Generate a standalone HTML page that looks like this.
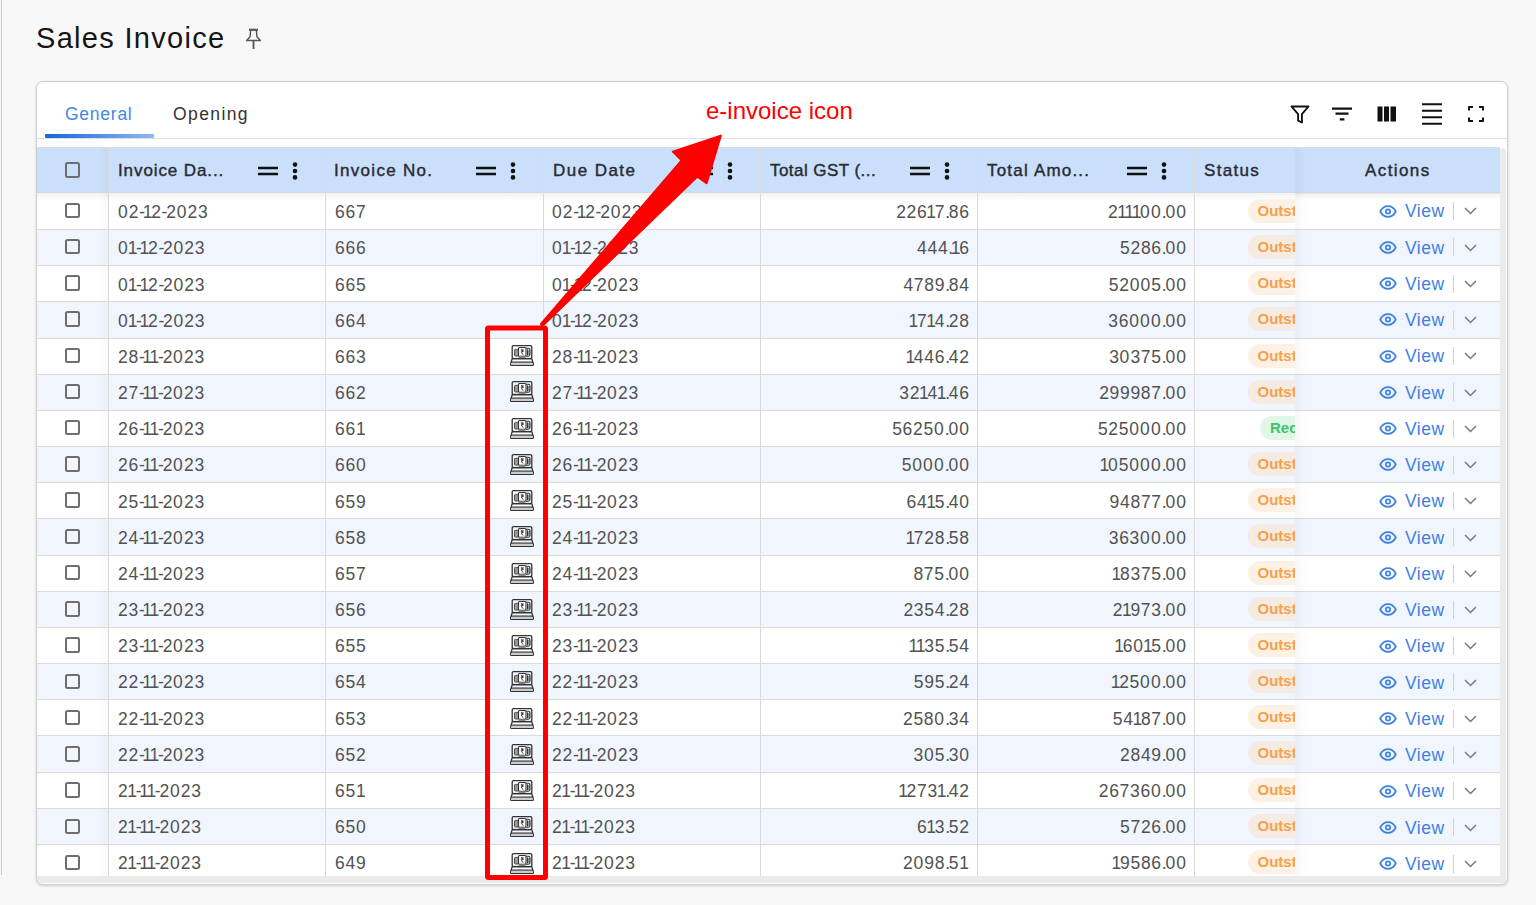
<!DOCTYPE html><html><head><meta charset="utf-8"><style>
*{box-sizing:border-box;margin:0;padding:0}
html,body{width:1536px;height:905px;overflow:hidden;background:#f8f8f8;font-family:"Liberation Sans",sans-serif;position:relative}
.abs{position:absolute}
#lline{left:1px;top:0;width:1px;height:875px;background:#c8c8c8}
#title{left:36px;top:18px;font-size:29px;line-height:40px;color:#151515;letter-spacing:1.3px;white-space:nowrap}
#card{left:36px;top:81px;width:1472px;height:804px;background:#fff;border:1px solid #cfcfcf;border-radius:7px;box-shadow:0 1px 3px rgba(0,0,0,.16);overflow:hidden}
.tab{top:104px;font-size:17.5px;line-height:20px;white-space:nowrap}
#tabline{left:45px;top:134px;width:109px;height:4px;background:linear-gradient(90deg,#1466db,#8db9f1);border-radius:1px}
#tabborder{left:37px;top:138px;width:1470px;height:1px;background:#dedede}
#hdrtop{left:37px;top:147px;width:1463px;height:1px;background:#dcdcdc}
#hdr{left:37px;top:148px;width:1463px;height:44.8px;background:#c9dffb}
.hcell{font-size:17px;font-weight:normal;-webkit-text-stroke:.4px #2a2a33;color:#2a2a33;white-space:nowrap;line-height:20px;letter-spacing:.7px}
.row{left:37px;width:1463px;height:36.16px;border-bottom:1px solid #dadada}
.alt{background:#f1f6fe}
.vline{width:1px;background:#dadada}
.txt{font-size:17.5px;color:#525252;white-space:nowrap;line-height:20px;letter-spacing:.7px}
.b{letter-spacing:-1.3px;margin-left:-1.2px}.z{letter-spacing:1.1px}.p{letter-spacing:-1.2px}.q{letter-spacing:0}
.r{text-align:right}
.cb{width:15.5px;height:15.5px;border:2px solid #6e6e6e;border-radius:2.5px}
.badge{height:24px;border-radius:12px;font-size:15px;font-weight:bold;line-height:23px;padding:0 10px;white-space:nowrap}
.bo{background:#fdf1e6;color:#f8a04a}
.bo.alt2{background:#f5ebe3}
.br{background:#e2f6e7;color:#3ec46a}
#actcol{left:1295px;top:148px;width:205px;height:728px;overflow:hidden}
.view{font-size:17.5px;color:#3f80e2;line-height:20px;white-space:nowrap;letter-spacing:.5px}
.vdiv{width:1px;height:18px;background:#cfcfcf}
#vscroll{left:1500px;top:148px;width:6px;height:735px;background:#ebebeb;border-radius:3px 3px 0 0}
#hscroll{left:37px;top:876px;width:1469px;height:7px;background:#ebebeb;border-radius:0 0 0 5px}
</style></head><body>
<div class="abs" id="lline"></div>
<div class="abs" id="title">Sales Invoice</div>
<svg class="abs" style="left:245px;top:28px" width="17" height="22" viewBox="0 0 17 22"><g fill="none" stroke="#555" stroke-width="1.4" stroke-linejoin="round"><path d="M4 1.8h9" stroke-width="2.2"/><path d="M5.6 2.5l-.5 6.2-3.5 3.8h13.8l-3.5-3.8-.5-6.2"/><path d="M8.5 12.5v8.5" stroke-width="1.8"/></g></svg>
<div class="abs" id="card"></div>
<div class="abs tab" style="left:65px;color:#3f88e9;letter-spacing:.75px">General</div>
<div class="abs tab" style="left:173px;color:#333;letter-spacing:1.4px">Opening</div>
<div class="abs" id="tabline"></div>
<div class="abs" id="tabborder"></div>
<svg class="abs" style="left:1290px;top:105px" width="20" height="19" viewBox="0 0 20 19"><path d="M1.5 1.5h17l-6.6 7.6v8.4l-3.8-1.8V9.1z" fill="none" stroke="#111" stroke-width="1.9" stroke-linejoin="round"/></svg>
<svg class="abs" style="left:1332px;top:106px" width="20" height="16" viewBox="0 0 20 16"><path d="M0 2.6h20M3.5 7.6h13M7.8 13.4h4.6" stroke="#111" stroke-width="2.2"/></svg>
<svg class="abs" style="left:1377px;top:106px" width="20" height="16" viewBox="0 0 20 16"><path d="M.5 .5h5v15h-5zM7 .5h5v15H7zM13.5 .5h5.5v15h-5.5z" fill="#111"/></svg>
<svg class="abs" style="left:1422px;top:102px" width="20" height="24" viewBox="0 0 20 24"><path d="M0 2.3h20M0 8.8h20M0 15.2h20M0 21.7h20" stroke="#111" stroke-width="2"/></svg>
<svg class="abs" style="left:1467.8px;top:106px" width="16" height="16" viewBox="0 0 16 16"><path d="M1 4.6V1h4M11 1h4v3.6M15 11.4V15h-4M5 15H1v-3.6" fill="none" stroke="#111" stroke-width="2" stroke-linejoin="round"/></svg>
<div class="abs" id="hdrtop"></div>
<div class="abs" id="hdr"></div>
<div class="abs" style="left:37px;top:192px;width:1463px;height:1px;background:#d4d8de"></div>
<div class="abs row" style="top:194.00px"></div>
<div class="abs row alt" style="top:230.16px"></div>
<div class="abs row" style="top:266.32px"></div>
<div class="abs row alt" style="top:302.48px"></div>
<div class="abs row" style="top:338.64px"></div>
<div class="abs row alt" style="top:374.80px"></div>
<div class="abs row" style="top:410.96px"></div>
<div class="abs row alt" style="top:447.12px"></div>
<div class="abs row" style="top:483.28px"></div>
<div class="abs row alt" style="top:519.44px"></div>
<div class="abs row" style="top:555.60px"></div>
<div class="abs row alt" style="top:591.76px"></div>
<div class="abs row" style="top:627.92px"></div>
<div class="abs row alt" style="top:664.08px"></div>
<div class="abs row" style="top:700.24px"></div>
<div class="abs row alt" style="top:736.40px"></div>
<div class="abs row" style="top:772.56px"></div>
<div class="abs row alt" style="top:808.72px"></div>
<div class="abs row" style="top:844.88px"></div>
<div class="abs" style="left:37px;top:192.8px;width:1463px;height:8px;background:linear-gradient(rgba(0,0,0,.05),rgba(0,0,0,0))"></div>
<div class="abs vline" style="left:108px;top:148px;height:728px"></div>
<div class="abs vline" style="left:325px;top:148px;height:728px"></div>
<div class="abs vline" style="left:543px;top:148px;height:728px"></div>
<div class="abs vline" style="left:760px;top:148px;height:728px"></div>
<div class="abs vline" style="left:977px;top:148px;height:728px"></div>
<div class="abs vline" style="left:1194px;top:148px;height:728px"></div>
<div class="abs" style="left:98px;top:148px;width:10px;height:728px;background:linear-gradient(90deg,rgba(0,0,0,0),rgba(0,0,0,.025))"></div>
<div class="abs hcell" style="left:118px;top:161px;letter-spacing:0.9px">Invoice Da...</div>
<svg class="abs" style="left:258px;top:166px" width="20" height="10" viewBox="0 0 20 10"><path d="M0 2h20M0 8h20" stroke="#111" stroke-width="2.6"/></svg>
<svg class="abs" style="left:292px;top:162px" width="6" height="18" viewBox="0 0 6 18"><circle cx="3" cy="2.6" r="2.3" fill="#111"/><circle cx="3" cy="9" r="2.3" fill="#111"/><circle cx="3" cy="15.4" r="2.3" fill="#111"/></svg>
<div class="abs hcell" style="left:334px;top:161px;letter-spacing:1.3px">Invoice No.</div>
<svg class="abs" style="left:476px;top:166px" width="20" height="10" viewBox="0 0 20 10"><path d="M0 2h20M0 8h20" stroke="#111" stroke-width="2.6"/></svg>
<svg class="abs" style="left:510px;top:162px" width="6" height="18" viewBox="0 0 6 18"><circle cx="3" cy="2.6" r="2.3" fill="#111"/><circle cx="3" cy="9" r="2.3" fill="#111"/><circle cx="3" cy="15.4" r="2.3" fill="#111"/></svg>
<div class="abs hcell" style="left:553px;top:161px;letter-spacing:1.45px">Due Date</div>
<svg class="abs" style="left:693px;top:166px" width="20" height="10" viewBox="0 0 20 10"><path d="M0 2h20M0 8h20" stroke="#111" stroke-width="2.6"/></svg>
<svg class="abs" style="left:727px;top:162px" width="6" height="18" viewBox="0 0 6 18"><circle cx="3" cy="2.6" r="2.3" fill="#111"/><circle cx="3" cy="9" r="2.3" fill="#111"/><circle cx="3" cy="15.4" r="2.3" fill="#111"/></svg>
<div class="abs hcell" style="left:770px;top:161px;letter-spacing:0.45px">Total GST (...</div>
<svg class="abs" style="left:910px;top:166px" width="20" height="10" viewBox="0 0 20 10"><path d="M0 2h20M0 8h20" stroke="#111" stroke-width="2.6"/></svg>
<svg class="abs" style="left:944px;top:162px" width="6" height="18" viewBox="0 0 6 18"><circle cx="3" cy="2.6" r="2.3" fill="#111"/><circle cx="3" cy="9" r="2.3" fill="#111"/><circle cx="3" cy="15.4" r="2.3" fill="#111"/></svg>
<div class="abs hcell" style="left:987px;top:161px;letter-spacing:1.2px">Total Amo...</div>
<svg class="abs" style="left:1127px;top:166px" width="20" height="10" viewBox="0 0 20 10"><path d="M0 2h20M0 8h20" stroke="#111" stroke-width="2.6"/></svg>
<svg class="abs" style="left:1161px;top:162px" width="6" height="18" viewBox="0 0 6 18"><circle cx="3" cy="2.6" r="2.3" fill="#111"/><circle cx="3" cy="9" r="2.3" fill="#111"/><circle cx="3" cy="15.4" r="2.3" fill="#111"/></svg>
<div class="abs hcell" style="left:1204px;top:161px;letter-spacing:1.3px">Status</div>
<div class="abs cb" style="left:64.5px;top:162px"></div>
<div class="abs cb" style="left:64.5px;top:202.60px"></div>
<div class="abs txt" style="left:118px;top:202.30px"><span class="z">0</span>2<span class="p">-</span><span class="b">1</span>2<span class="p">-</span>2<span class="z">0</span>2<span class="q">3</span></div>
<div class="abs txt" style="left:335px;top:202.30px">66<span class="q">7</span></div>
<div class="abs txt" style="left:552px;top:202.30px"><span class="z">0</span>2<span class="p">-</span><span class="b">1</span>2<span class="p">-</span>2<span class="z">0</span>2<span class="q">3</span></div>
<div class="abs txt r" style="left:770px;width:199px;top:202.30px">226<span class="b">1</span>7<span class="p">.</span>8<span class="q">6</span></div>
<div class="abs txt r" style="left:987px;width:199px;top:202.30px">2<span class="b">1</span><span class="b">1</span><span class="b">1</span><span class="z">0</span><span class="z">0</span><span class="p">.</span><span class="z">0</span><span class="q">0</span></div>
<div class="abs badge bo" style="left:1247.5px;top:199.00px">Outstanding</div>
<div class="abs cb" style="left:64.5px;top:238.83px"></div>
<div class="abs txt" style="left:118px;top:238.46px"><span class="z">0</span><span class="b">1</span><span class="p">-</span><span class="b">1</span>2<span class="p">-</span>2<span class="z">0</span>2<span class="q">3</span></div>
<div class="abs txt" style="left:335px;top:238.46px">66<span class="q">6</span></div>
<div class="abs txt" style="left:552px;top:238.46px"><span class="z">0</span><span class="b">1</span><span class="p">-</span><span class="b">1</span>2<span class="p">-</span>2<span class="z">0</span>2<span class="q">3</span></div>
<div class="abs txt r" style="left:770px;width:199px;top:238.46px">444<span class="p">.</span><span class="b">1</span><span class="q">6</span></div>
<div class="abs txt r" style="left:987px;width:199px;top:238.46px">5286<span class="p">.</span><span class="z">0</span><span class="q">0</span></div>
<div class="abs badge bo alt2" style="left:1247.5px;top:235.16px">Outstanding</div>
<div class="abs cb" style="left:64.5px;top:275.06px"></div>
<div class="abs txt" style="left:118px;top:274.62px"><span class="z">0</span><span class="b">1</span><span class="p">-</span><span class="b">1</span>2<span class="p">-</span>2<span class="z">0</span>2<span class="q">3</span></div>
<div class="abs txt" style="left:335px;top:274.62px">66<span class="q">5</span></div>
<div class="abs txt" style="left:552px;top:274.62px"><span class="z">0</span><span class="b">1</span><span class="p">-</span><span class="b">1</span>2<span class="p">-</span>2<span class="z">0</span>2<span class="q">3</span></div>
<div class="abs txt r" style="left:770px;width:199px;top:274.62px">4789<span class="p">.</span>8<span class="q">4</span></div>
<div class="abs txt r" style="left:987px;width:199px;top:274.62px">52<span class="z">0</span><span class="z">0</span>5<span class="p">.</span><span class="z">0</span><span class="q">0</span></div>
<div class="abs badge bo" style="left:1247.5px;top:271.32px">Outstanding</div>
<div class="abs cb" style="left:64.5px;top:311.29px"></div>
<div class="abs txt" style="left:118px;top:310.78px"><span class="z">0</span><span class="b">1</span><span class="p">-</span><span class="b">1</span>2<span class="p">-</span>2<span class="z">0</span>2<span class="q">3</span></div>
<div class="abs txt" style="left:335px;top:310.78px">66<span class="q">4</span></div>
<div class="abs txt" style="left:552px;top:310.78px"><span class="z">0</span><span class="b">1</span><span class="p">-</span><span class="b">1</span>2<span class="p">-</span>2<span class="z">0</span>2<span class="q">3</span></div>
<div class="abs txt r" style="left:770px;width:199px;top:310.78px"><span class="b">1</span>7<span class="b">1</span>4<span class="p">.</span>2<span class="q">8</span></div>
<div class="abs txt r" style="left:987px;width:199px;top:310.78px">36<span class="z">0</span><span class="z">0</span><span class="z">0</span><span class="p">.</span><span class="z">0</span><span class="q">0</span></div>
<div class="abs badge bo alt2" style="left:1247.5px;top:307.48px">Outstanding</div>
<div class="abs cb" style="left:64.5px;top:347.52px"></div>
<div class="abs txt" style="left:118px;top:346.94px">28<span class="p">-</span><span class="b">1</span><span class="b">1</span><span class="p">-</span>2<span class="z">0</span>2<span class="q">3</span></div>
<div class="abs txt" style="left:335px;top:346.94px">66<span class="q">3</span></div>
<div class="abs txt" style="left:552px;top:346.94px">28<span class="p">-</span><span class="b">1</span><span class="b">1</span><span class="p">-</span>2<span class="z">0</span>2<span class="q">3</span></div>
<div class="abs txt r" style="left:770px;width:199px;top:346.94px"><span class="b">1</span>446<span class="p">.</span>4<span class="q">2</span></div>
<div class="abs txt r" style="left:987px;width:199px;top:346.94px">3<span class="z">0</span>375<span class="p">.</span><span class="z">0</span><span class="q">0</span></div>
<div class="abs badge bo" style="left:1247.5px;top:343.64px">Outstanding</div>
<svg class="abs" style="left:510px;top:345.10px" width="24" height="21" viewBox="0 0 24 21"><rect x="2.2" y="0.65" width="19.6" height="12.9" rx="1.3" fill="none" stroke="#333" stroke-width="1.3"/><path d="M2.2 13.6L0.5 19.2Q0.3 20.3 1.6 20.3H22.4Q23.7 20.3 23.5 19.2L21.8 13.6" fill="none" stroke="#333" stroke-width="1.3"/><path d="M1.2 18.9h21.6" stroke="#ccc" stroke-width="2"/><path d="M1.8 13.6h20.4" stroke="#333" stroke-width="1.4"/><path d="M1 17.1h22" stroke="#333" stroke-width="1.2"/><rect x="4.5" y="4.4" width="4.2" height="6.6" rx=".8" fill="#999" stroke="#444" stroke-width=".9"/><path d="M16 3.3h2.3c1 0 1.7.6 1.7 1.6v4.7c0 1-.7 1.6-1.7 1.6H16" fill="#fff" stroke="#333" stroke-width="1.1"/><path d="M17.5 4.4v6M19 4.8v5.2" stroke="#333" stroke-width="1"/><rect x="8.5" y="2.5" width="7.5" height="8.8" rx="1" fill="#fff" stroke="#333" stroke-width="1.1"/><path d="M10.9 4.9h2.8M10.9 6.2h2.8M11.4 4.9c1.7 0 1.7 2.6 0 2.6l1.8 2.2" fill="none" stroke="#222" stroke-width=".9"/><rect x="8.5" y="11.5" width="7" height="1.5" fill="#888"/></svg>
<div class="abs cb" style="left:64.5px;top:383.75px"></div>
<div class="abs txt" style="left:118px;top:383.10px">27<span class="p">-</span><span class="b">1</span><span class="b">1</span><span class="p">-</span>2<span class="z">0</span>2<span class="q">3</span></div>
<div class="abs txt" style="left:335px;top:383.10px">66<span class="q">2</span></div>
<div class="abs txt" style="left:552px;top:383.10px">27<span class="p">-</span><span class="b">1</span><span class="b">1</span><span class="p">-</span>2<span class="z">0</span>2<span class="q">3</span></div>
<div class="abs txt r" style="left:770px;width:199px;top:383.10px">32<span class="b">1</span>4<span class="b">1</span><span class="p">.</span>4<span class="q">6</span></div>
<div class="abs txt r" style="left:987px;width:199px;top:383.10px">299987<span class="p">.</span><span class="z">0</span><span class="q">0</span></div>
<div class="abs badge bo alt2" style="left:1247.5px;top:379.80px">Outstanding</div>
<svg class="abs" style="left:510px;top:381.35px" width="24" height="21" viewBox="0 0 24 21"><rect x="2.2" y="0.65" width="19.6" height="12.9" rx="1.3" fill="none" stroke="#333" stroke-width="1.3"/><path d="M2.2 13.6L0.5 19.2Q0.3 20.3 1.6 20.3H22.4Q23.7 20.3 23.5 19.2L21.8 13.6" fill="none" stroke="#333" stroke-width="1.3"/><path d="M1.2 18.9h21.6" stroke="#ccc" stroke-width="2"/><path d="M1.8 13.6h20.4" stroke="#333" stroke-width="1.4"/><path d="M1 17.1h22" stroke="#333" stroke-width="1.2"/><rect x="4.5" y="4.4" width="4.2" height="6.6" rx=".8" fill="#999" stroke="#444" stroke-width=".9"/><path d="M16 3.3h2.3c1 0 1.7.6 1.7 1.6v4.7c0 1-.7 1.6-1.7 1.6H16" fill="#fff" stroke="#333" stroke-width="1.1"/><path d="M17.5 4.4v6M19 4.8v5.2" stroke="#333" stroke-width="1"/><rect x="8.5" y="2.5" width="7.5" height="8.8" rx="1" fill="#fff" stroke="#333" stroke-width="1.1"/><path d="M10.9 4.9h2.8M10.9 6.2h2.8M11.4 4.9c1.7 0 1.7 2.6 0 2.6l1.8 2.2" fill="none" stroke="#222" stroke-width=".9"/><rect x="8.5" y="11.5" width="7" height="1.5" fill="#888"/></svg>
<div class="abs cb" style="left:64.5px;top:419.98px"></div>
<div class="abs txt" style="left:118px;top:419.26px">26<span class="p">-</span><span class="b">1</span><span class="b">1</span><span class="p">-</span>2<span class="z">0</span>2<span class="q">3</span></div>
<div class="abs txt" style="left:335px;top:419.26px">66<span class="q">1</span></div>
<div class="abs txt" style="left:552px;top:419.26px">26<span class="p">-</span><span class="b">1</span><span class="b">1</span><span class="p">-</span>2<span class="z">0</span>2<span class="q">3</span></div>
<div class="abs txt r" style="left:770px;width:199px;top:419.26px">5625<span class="z">0</span><span class="p">.</span><span class="z">0</span><span class="q">0</span></div>
<div class="abs txt r" style="left:987px;width:199px;top:419.26px">525<span class="z">0</span><span class="z">0</span><span class="z">0</span><span class="p">.</span><span class="z">0</span><span class="q">0</span></div>
<div class="abs badge br" style="left:1260px;top:415.96px">Received</div>
<svg class="abs" style="left:510px;top:417.60px" width="24" height="21" viewBox="0 0 24 21"><rect x="2.2" y="0.65" width="19.6" height="12.9" rx="1.3" fill="none" stroke="#333" stroke-width="1.3"/><path d="M2.2 13.6L0.5 19.2Q0.3 20.3 1.6 20.3H22.4Q23.7 20.3 23.5 19.2L21.8 13.6" fill="none" stroke="#333" stroke-width="1.3"/><path d="M1.2 18.9h21.6" stroke="#ccc" stroke-width="2"/><path d="M1.8 13.6h20.4" stroke="#333" stroke-width="1.4"/><path d="M1 17.1h22" stroke="#333" stroke-width="1.2"/><rect x="4.5" y="4.4" width="4.2" height="6.6" rx=".8" fill="#999" stroke="#444" stroke-width=".9"/><path d="M16 3.3h2.3c1 0 1.7.6 1.7 1.6v4.7c0 1-.7 1.6-1.7 1.6H16" fill="#fff" stroke="#333" stroke-width="1.1"/><path d="M17.5 4.4v6M19 4.8v5.2" stroke="#333" stroke-width="1"/><rect x="8.5" y="2.5" width="7.5" height="8.8" rx="1" fill="#fff" stroke="#333" stroke-width="1.1"/><path d="M10.9 4.9h2.8M10.9 6.2h2.8M11.4 4.9c1.7 0 1.7 2.6 0 2.6l1.8 2.2" fill="none" stroke="#222" stroke-width=".9"/><rect x="8.5" y="11.5" width="7" height="1.5" fill="#888"/></svg>
<div class="abs cb" style="left:64.5px;top:456.21px"></div>
<div class="abs txt" style="left:118px;top:455.42px">26<span class="p">-</span><span class="b">1</span><span class="b">1</span><span class="p">-</span>2<span class="z">0</span>2<span class="q">3</span></div>
<div class="abs txt" style="left:335px;top:455.42px">66<span class="q">0</span></div>
<div class="abs txt" style="left:552px;top:455.42px">26<span class="p">-</span><span class="b">1</span><span class="b">1</span><span class="p">-</span>2<span class="z">0</span>2<span class="q">3</span></div>
<div class="abs txt r" style="left:770px;width:199px;top:455.42px">5<span class="z">0</span><span class="z">0</span><span class="z">0</span><span class="p">.</span><span class="z">0</span><span class="q">0</span></div>
<div class="abs txt r" style="left:987px;width:199px;top:455.42px"><span class="b">1</span><span class="z">0</span>5<span class="z">0</span><span class="z">0</span><span class="z">0</span><span class="p">.</span><span class="z">0</span><span class="q">0</span></div>
<div class="abs badge bo alt2" style="left:1247.5px;top:452.12px">Outstanding</div>
<svg class="abs" style="left:510px;top:453.85px" width="24" height="21" viewBox="0 0 24 21"><rect x="2.2" y="0.65" width="19.6" height="12.9" rx="1.3" fill="none" stroke="#333" stroke-width="1.3"/><path d="M2.2 13.6L0.5 19.2Q0.3 20.3 1.6 20.3H22.4Q23.7 20.3 23.5 19.2L21.8 13.6" fill="none" stroke="#333" stroke-width="1.3"/><path d="M1.2 18.9h21.6" stroke="#ccc" stroke-width="2"/><path d="M1.8 13.6h20.4" stroke="#333" stroke-width="1.4"/><path d="M1 17.1h22" stroke="#333" stroke-width="1.2"/><rect x="4.5" y="4.4" width="4.2" height="6.6" rx=".8" fill="#999" stroke="#444" stroke-width=".9"/><path d="M16 3.3h2.3c1 0 1.7.6 1.7 1.6v4.7c0 1-.7 1.6-1.7 1.6H16" fill="#fff" stroke="#333" stroke-width="1.1"/><path d="M17.5 4.4v6M19 4.8v5.2" stroke="#333" stroke-width="1"/><rect x="8.5" y="2.5" width="7.5" height="8.8" rx="1" fill="#fff" stroke="#333" stroke-width="1.1"/><path d="M10.9 4.9h2.8M10.9 6.2h2.8M11.4 4.9c1.7 0 1.7 2.6 0 2.6l1.8 2.2" fill="none" stroke="#222" stroke-width=".9"/><rect x="8.5" y="11.5" width="7" height="1.5" fill="#888"/></svg>
<div class="abs cb" style="left:64.5px;top:492.44px"></div>
<div class="abs txt" style="left:118px;top:491.58px">25<span class="p">-</span><span class="b">1</span><span class="b">1</span><span class="p">-</span>2<span class="z">0</span>2<span class="q">3</span></div>
<div class="abs txt" style="left:335px;top:491.58px">65<span class="q">9</span></div>
<div class="abs txt" style="left:552px;top:491.58px">25<span class="p">-</span><span class="b">1</span><span class="b">1</span><span class="p">-</span>2<span class="z">0</span>2<span class="q">3</span></div>
<div class="abs txt r" style="left:770px;width:199px;top:491.58px">64<span class="b">1</span>5<span class="p">.</span>4<span class="q">0</span></div>
<div class="abs txt r" style="left:987px;width:199px;top:491.58px">94877<span class="p">.</span><span class="z">0</span><span class="q">0</span></div>
<div class="abs badge bo" style="left:1247.5px;top:488.28px">Outstanding</div>
<svg class="abs" style="left:510px;top:490.10px" width="24" height="21" viewBox="0 0 24 21"><rect x="2.2" y="0.65" width="19.6" height="12.9" rx="1.3" fill="none" stroke="#333" stroke-width="1.3"/><path d="M2.2 13.6L0.5 19.2Q0.3 20.3 1.6 20.3H22.4Q23.7 20.3 23.5 19.2L21.8 13.6" fill="none" stroke="#333" stroke-width="1.3"/><path d="M1.2 18.9h21.6" stroke="#ccc" stroke-width="2"/><path d="M1.8 13.6h20.4" stroke="#333" stroke-width="1.4"/><path d="M1 17.1h22" stroke="#333" stroke-width="1.2"/><rect x="4.5" y="4.4" width="4.2" height="6.6" rx=".8" fill="#999" stroke="#444" stroke-width=".9"/><path d="M16 3.3h2.3c1 0 1.7.6 1.7 1.6v4.7c0 1-.7 1.6-1.7 1.6H16" fill="#fff" stroke="#333" stroke-width="1.1"/><path d="M17.5 4.4v6M19 4.8v5.2" stroke="#333" stroke-width="1"/><rect x="8.5" y="2.5" width="7.5" height="8.8" rx="1" fill="#fff" stroke="#333" stroke-width="1.1"/><path d="M10.9 4.9h2.8M10.9 6.2h2.8M11.4 4.9c1.7 0 1.7 2.6 0 2.6l1.8 2.2" fill="none" stroke="#222" stroke-width=".9"/><rect x="8.5" y="11.5" width="7" height="1.5" fill="#888"/></svg>
<div class="abs cb" style="left:64.5px;top:528.67px"></div>
<div class="abs txt" style="left:118px;top:527.74px">24<span class="p">-</span><span class="b">1</span><span class="b">1</span><span class="p">-</span>2<span class="z">0</span>2<span class="q">3</span></div>
<div class="abs txt" style="left:335px;top:527.74px">65<span class="q">8</span></div>
<div class="abs txt" style="left:552px;top:527.74px">24<span class="p">-</span><span class="b">1</span><span class="b">1</span><span class="p">-</span>2<span class="z">0</span>2<span class="q">3</span></div>
<div class="abs txt r" style="left:770px;width:199px;top:527.74px"><span class="b">1</span>728<span class="p">.</span>5<span class="q">8</span></div>
<div class="abs txt r" style="left:987px;width:199px;top:527.74px">363<span class="z">0</span><span class="z">0</span><span class="p">.</span><span class="z">0</span><span class="q">0</span></div>
<div class="abs badge bo alt2" style="left:1247.5px;top:524.44px">Outstanding</div>
<svg class="abs" style="left:510px;top:526.35px" width="24" height="21" viewBox="0 0 24 21"><rect x="2.2" y="0.65" width="19.6" height="12.9" rx="1.3" fill="none" stroke="#333" stroke-width="1.3"/><path d="M2.2 13.6L0.5 19.2Q0.3 20.3 1.6 20.3H22.4Q23.7 20.3 23.5 19.2L21.8 13.6" fill="none" stroke="#333" stroke-width="1.3"/><path d="M1.2 18.9h21.6" stroke="#ccc" stroke-width="2"/><path d="M1.8 13.6h20.4" stroke="#333" stroke-width="1.4"/><path d="M1 17.1h22" stroke="#333" stroke-width="1.2"/><rect x="4.5" y="4.4" width="4.2" height="6.6" rx=".8" fill="#999" stroke="#444" stroke-width=".9"/><path d="M16 3.3h2.3c1 0 1.7.6 1.7 1.6v4.7c0 1-.7 1.6-1.7 1.6H16" fill="#fff" stroke="#333" stroke-width="1.1"/><path d="M17.5 4.4v6M19 4.8v5.2" stroke="#333" stroke-width="1"/><rect x="8.5" y="2.5" width="7.5" height="8.8" rx="1" fill="#fff" stroke="#333" stroke-width="1.1"/><path d="M10.9 4.9h2.8M10.9 6.2h2.8M11.4 4.9c1.7 0 1.7 2.6 0 2.6l1.8 2.2" fill="none" stroke="#222" stroke-width=".9"/><rect x="8.5" y="11.5" width="7" height="1.5" fill="#888"/></svg>
<div class="abs cb" style="left:64.5px;top:564.90px"></div>
<div class="abs txt" style="left:118px;top:563.90px">24<span class="p">-</span><span class="b">1</span><span class="b">1</span><span class="p">-</span>2<span class="z">0</span>2<span class="q">3</span></div>
<div class="abs txt" style="left:335px;top:563.90px">65<span class="q">7</span></div>
<div class="abs txt" style="left:552px;top:563.90px">24<span class="p">-</span><span class="b">1</span><span class="b">1</span><span class="p">-</span>2<span class="z">0</span>2<span class="q">3</span></div>
<div class="abs txt r" style="left:770px;width:199px;top:563.90px">875<span class="p">.</span><span class="z">0</span><span class="q">0</span></div>
<div class="abs txt r" style="left:987px;width:199px;top:563.90px"><span class="b">1</span>8375<span class="p">.</span><span class="z">0</span><span class="q">0</span></div>
<div class="abs badge bo" style="left:1247.5px;top:560.60px">Outstanding</div>
<svg class="abs" style="left:510px;top:562.60px" width="24" height="21" viewBox="0 0 24 21"><rect x="2.2" y="0.65" width="19.6" height="12.9" rx="1.3" fill="none" stroke="#333" stroke-width="1.3"/><path d="M2.2 13.6L0.5 19.2Q0.3 20.3 1.6 20.3H22.4Q23.7 20.3 23.5 19.2L21.8 13.6" fill="none" stroke="#333" stroke-width="1.3"/><path d="M1.2 18.9h21.6" stroke="#ccc" stroke-width="2"/><path d="M1.8 13.6h20.4" stroke="#333" stroke-width="1.4"/><path d="M1 17.1h22" stroke="#333" stroke-width="1.2"/><rect x="4.5" y="4.4" width="4.2" height="6.6" rx=".8" fill="#999" stroke="#444" stroke-width=".9"/><path d="M16 3.3h2.3c1 0 1.7.6 1.7 1.6v4.7c0 1-.7 1.6-1.7 1.6H16" fill="#fff" stroke="#333" stroke-width="1.1"/><path d="M17.5 4.4v6M19 4.8v5.2" stroke="#333" stroke-width="1"/><rect x="8.5" y="2.5" width="7.5" height="8.8" rx="1" fill="#fff" stroke="#333" stroke-width="1.1"/><path d="M10.9 4.9h2.8M10.9 6.2h2.8M11.4 4.9c1.7 0 1.7 2.6 0 2.6l1.8 2.2" fill="none" stroke="#222" stroke-width=".9"/><rect x="8.5" y="11.5" width="7" height="1.5" fill="#888"/></svg>
<div class="abs cb" style="left:64.5px;top:601.13px"></div>
<div class="abs txt" style="left:118px;top:600.06px">23<span class="p">-</span><span class="b">1</span><span class="b">1</span><span class="p">-</span>2<span class="z">0</span>2<span class="q">3</span></div>
<div class="abs txt" style="left:335px;top:600.06px">65<span class="q">6</span></div>
<div class="abs txt" style="left:552px;top:600.06px">23<span class="p">-</span><span class="b">1</span><span class="b">1</span><span class="p">-</span>2<span class="z">0</span>2<span class="q">3</span></div>
<div class="abs txt r" style="left:770px;width:199px;top:600.06px">2354<span class="p">.</span>2<span class="q">8</span></div>
<div class="abs txt r" style="left:987px;width:199px;top:600.06px">2<span class="b">1</span>973<span class="p">.</span><span class="z">0</span><span class="q">0</span></div>
<div class="abs badge bo alt2" style="left:1247.5px;top:596.76px">Outstanding</div>
<svg class="abs" style="left:510px;top:598.85px" width="24" height="21" viewBox="0 0 24 21"><rect x="2.2" y="0.65" width="19.6" height="12.9" rx="1.3" fill="none" stroke="#333" stroke-width="1.3"/><path d="M2.2 13.6L0.5 19.2Q0.3 20.3 1.6 20.3H22.4Q23.7 20.3 23.5 19.2L21.8 13.6" fill="none" stroke="#333" stroke-width="1.3"/><path d="M1.2 18.9h21.6" stroke="#ccc" stroke-width="2"/><path d="M1.8 13.6h20.4" stroke="#333" stroke-width="1.4"/><path d="M1 17.1h22" stroke="#333" stroke-width="1.2"/><rect x="4.5" y="4.4" width="4.2" height="6.6" rx=".8" fill="#999" stroke="#444" stroke-width=".9"/><path d="M16 3.3h2.3c1 0 1.7.6 1.7 1.6v4.7c0 1-.7 1.6-1.7 1.6H16" fill="#fff" stroke="#333" stroke-width="1.1"/><path d="M17.5 4.4v6M19 4.8v5.2" stroke="#333" stroke-width="1"/><rect x="8.5" y="2.5" width="7.5" height="8.8" rx="1" fill="#fff" stroke="#333" stroke-width="1.1"/><path d="M10.9 4.9h2.8M10.9 6.2h2.8M11.4 4.9c1.7 0 1.7 2.6 0 2.6l1.8 2.2" fill="none" stroke="#222" stroke-width=".9"/><rect x="8.5" y="11.5" width="7" height="1.5" fill="#888"/></svg>
<div class="abs cb" style="left:64.5px;top:637.36px"></div>
<div class="abs txt" style="left:118px;top:636.22px">23<span class="p">-</span><span class="b">1</span><span class="b">1</span><span class="p">-</span>2<span class="z">0</span>2<span class="q">3</span></div>
<div class="abs txt" style="left:335px;top:636.22px">65<span class="q">5</span></div>
<div class="abs txt" style="left:552px;top:636.22px">23<span class="p">-</span><span class="b">1</span><span class="b">1</span><span class="p">-</span>2<span class="z">0</span>2<span class="q">3</span></div>
<div class="abs txt r" style="left:770px;width:199px;top:636.22px"><span class="b">1</span><span class="b">1</span>35<span class="p">.</span>5<span class="q">4</span></div>
<div class="abs txt r" style="left:987px;width:199px;top:636.22px"><span class="b">1</span>6<span class="z">0</span><span class="b">1</span>5<span class="p">.</span><span class="z">0</span><span class="q">0</span></div>
<div class="abs badge bo" style="left:1247.5px;top:632.92px">Outstanding</div>
<svg class="abs" style="left:510px;top:635.10px" width="24" height="21" viewBox="0 0 24 21"><rect x="2.2" y="0.65" width="19.6" height="12.9" rx="1.3" fill="none" stroke="#333" stroke-width="1.3"/><path d="M2.2 13.6L0.5 19.2Q0.3 20.3 1.6 20.3H22.4Q23.7 20.3 23.5 19.2L21.8 13.6" fill="none" stroke="#333" stroke-width="1.3"/><path d="M1.2 18.9h21.6" stroke="#ccc" stroke-width="2"/><path d="M1.8 13.6h20.4" stroke="#333" stroke-width="1.4"/><path d="M1 17.1h22" stroke="#333" stroke-width="1.2"/><rect x="4.5" y="4.4" width="4.2" height="6.6" rx=".8" fill="#999" stroke="#444" stroke-width=".9"/><path d="M16 3.3h2.3c1 0 1.7.6 1.7 1.6v4.7c0 1-.7 1.6-1.7 1.6H16" fill="#fff" stroke="#333" stroke-width="1.1"/><path d="M17.5 4.4v6M19 4.8v5.2" stroke="#333" stroke-width="1"/><rect x="8.5" y="2.5" width="7.5" height="8.8" rx="1" fill="#fff" stroke="#333" stroke-width="1.1"/><path d="M10.9 4.9h2.8M10.9 6.2h2.8M11.4 4.9c1.7 0 1.7 2.6 0 2.6l1.8 2.2" fill="none" stroke="#222" stroke-width=".9"/><rect x="8.5" y="11.5" width="7" height="1.5" fill="#888"/></svg>
<div class="abs cb" style="left:64.5px;top:673.59px"></div>
<div class="abs txt" style="left:118px;top:672.38px">22<span class="p">-</span><span class="b">1</span><span class="b">1</span><span class="p">-</span>2<span class="z">0</span>2<span class="q">3</span></div>
<div class="abs txt" style="left:335px;top:672.38px">65<span class="q">4</span></div>
<div class="abs txt" style="left:552px;top:672.38px">22<span class="p">-</span><span class="b">1</span><span class="b">1</span><span class="p">-</span>2<span class="z">0</span>2<span class="q">3</span></div>
<div class="abs txt r" style="left:770px;width:199px;top:672.38px">595<span class="p">.</span>2<span class="q">4</span></div>
<div class="abs txt r" style="left:987px;width:199px;top:672.38px"><span class="b">1</span>25<span class="z">0</span><span class="z">0</span><span class="p">.</span><span class="z">0</span><span class="q">0</span></div>
<div class="abs badge bo alt2" style="left:1247.5px;top:669.08px">Outstanding</div>
<svg class="abs" style="left:510px;top:671.35px" width="24" height="21" viewBox="0 0 24 21"><rect x="2.2" y="0.65" width="19.6" height="12.9" rx="1.3" fill="none" stroke="#333" stroke-width="1.3"/><path d="M2.2 13.6L0.5 19.2Q0.3 20.3 1.6 20.3H22.4Q23.7 20.3 23.5 19.2L21.8 13.6" fill="none" stroke="#333" stroke-width="1.3"/><path d="M1.2 18.9h21.6" stroke="#ccc" stroke-width="2"/><path d="M1.8 13.6h20.4" stroke="#333" stroke-width="1.4"/><path d="M1 17.1h22" stroke="#333" stroke-width="1.2"/><rect x="4.5" y="4.4" width="4.2" height="6.6" rx=".8" fill="#999" stroke="#444" stroke-width=".9"/><path d="M16 3.3h2.3c1 0 1.7.6 1.7 1.6v4.7c0 1-.7 1.6-1.7 1.6H16" fill="#fff" stroke="#333" stroke-width="1.1"/><path d="M17.5 4.4v6M19 4.8v5.2" stroke="#333" stroke-width="1"/><rect x="8.5" y="2.5" width="7.5" height="8.8" rx="1" fill="#fff" stroke="#333" stroke-width="1.1"/><path d="M10.9 4.9h2.8M10.9 6.2h2.8M11.4 4.9c1.7 0 1.7 2.6 0 2.6l1.8 2.2" fill="none" stroke="#222" stroke-width=".9"/><rect x="8.5" y="11.5" width="7" height="1.5" fill="#888"/></svg>
<div class="abs cb" style="left:64.5px;top:709.82px"></div>
<div class="abs txt" style="left:118px;top:708.54px">22<span class="p">-</span><span class="b">1</span><span class="b">1</span><span class="p">-</span>2<span class="z">0</span>2<span class="q">3</span></div>
<div class="abs txt" style="left:335px;top:708.54px">65<span class="q">3</span></div>
<div class="abs txt" style="left:552px;top:708.54px">22<span class="p">-</span><span class="b">1</span><span class="b">1</span><span class="p">-</span>2<span class="z">0</span>2<span class="q">3</span></div>
<div class="abs txt r" style="left:770px;width:199px;top:708.54px">258<span class="z">0</span><span class="p">.</span>3<span class="q">4</span></div>
<div class="abs txt r" style="left:987px;width:199px;top:708.54px">54<span class="b">1</span>87<span class="p">.</span><span class="z">0</span><span class="q">0</span></div>
<div class="abs badge bo" style="left:1247.5px;top:705.24px">Outstanding</div>
<svg class="abs" style="left:510px;top:707.60px" width="24" height="21" viewBox="0 0 24 21"><rect x="2.2" y="0.65" width="19.6" height="12.9" rx="1.3" fill="none" stroke="#333" stroke-width="1.3"/><path d="M2.2 13.6L0.5 19.2Q0.3 20.3 1.6 20.3H22.4Q23.7 20.3 23.5 19.2L21.8 13.6" fill="none" stroke="#333" stroke-width="1.3"/><path d="M1.2 18.9h21.6" stroke="#ccc" stroke-width="2"/><path d="M1.8 13.6h20.4" stroke="#333" stroke-width="1.4"/><path d="M1 17.1h22" stroke="#333" stroke-width="1.2"/><rect x="4.5" y="4.4" width="4.2" height="6.6" rx=".8" fill="#999" stroke="#444" stroke-width=".9"/><path d="M16 3.3h2.3c1 0 1.7.6 1.7 1.6v4.7c0 1-.7 1.6-1.7 1.6H16" fill="#fff" stroke="#333" stroke-width="1.1"/><path d="M17.5 4.4v6M19 4.8v5.2" stroke="#333" stroke-width="1"/><rect x="8.5" y="2.5" width="7.5" height="8.8" rx="1" fill="#fff" stroke="#333" stroke-width="1.1"/><path d="M10.9 4.9h2.8M10.9 6.2h2.8M11.4 4.9c1.7 0 1.7 2.6 0 2.6l1.8 2.2" fill="none" stroke="#222" stroke-width=".9"/><rect x="8.5" y="11.5" width="7" height="1.5" fill="#888"/></svg>
<div class="abs cb" style="left:64.5px;top:746.05px"></div>
<div class="abs txt" style="left:118px;top:744.70px">22<span class="p">-</span><span class="b">1</span><span class="b">1</span><span class="p">-</span>2<span class="z">0</span>2<span class="q">3</span></div>
<div class="abs txt" style="left:335px;top:744.70px">65<span class="q">2</span></div>
<div class="abs txt" style="left:552px;top:744.70px">22<span class="p">-</span><span class="b">1</span><span class="b">1</span><span class="p">-</span>2<span class="z">0</span>2<span class="q">3</span></div>
<div class="abs txt r" style="left:770px;width:199px;top:744.70px">3<span class="z">0</span>5<span class="p">.</span>3<span class="q">0</span></div>
<div class="abs txt r" style="left:987px;width:199px;top:744.70px">2849<span class="p">.</span><span class="z">0</span><span class="q">0</span></div>
<div class="abs badge bo alt2" style="left:1247.5px;top:741.40px">Outstanding</div>
<svg class="abs" style="left:510px;top:743.85px" width="24" height="21" viewBox="0 0 24 21"><rect x="2.2" y="0.65" width="19.6" height="12.9" rx="1.3" fill="none" stroke="#333" stroke-width="1.3"/><path d="M2.2 13.6L0.5 19.2Q0.3 20.3 1.6 20.3H22.4Q23.7 20.3 23.5 19.2L21.8 13.6" fill="none" stroke="#333" stroke-width="1.3"/><path d="M1.2 18.9h21.6" stroke="#ccc" stroke-width="2"/><path d="M1.8 13.6h20.4" stroke="#333" stroke-width="1.4"/><path d="M1 17.1h22" stroke="#333" stroke-width="1.2"/><rect x="4.5" y="4.4" width="4.2" height="6.6" rx=".8" fill="#999" stroke="#444" stroke-width=".9"/><path d="M16 3.3h2.3c1 0 1.7.6 1.7 1.6v4.7c0 1-.7 1.6-1.7 1.6H16" fill="#fff" stroke="#333" stroke-width="1.1"/><path d="M17.5 4.4v6M19 4.8v5.2" stroke="#333" stroke-width="1"/><rect x="8.5" y="2.5" width="7.5" height="8.8" rx="1" fill="#fff" stroke="#333" stroke-width="1.1"/><path d="M10.9 4.9h2.8M10.9 6.2h2.8M11.4 4.9c1.7 0 1.7 2.6 0 2.6l1.8 2.2" fill="none" stroke="#222" stroke-width=".9"/><rect x="8.5" y="11.5" width="7" height="1.5" fill="#888"/></svg>
<div class="abs cb" style="left:64.5px;top:782.28px"></div>
<div class="abs txt" style="left:118px;top:780.86px">2<span class="b">1</span><span class="p">-</span><span class="b">1</span><span class="b">1</span><span class="p">-</span>2<span class="z">0</span>2<span class="q">3</span></div>
<div class="abs txt" style="left:335px;top:780.86px">65<span class="q">1</span></div>
<div class="abs txt" style="left:552px;top:780.86px">2<span class="b">1</span><span class="p">-</span><span class="b">1</span><span class="b">1</span><span class="p">-</span>2<span class="z">0</span>2<span class="q">3</span></div>
<div class="abs txt r" style="left:770px;width:199px;top:780.86px"><span class="b">1</span>273<span class="b">1</span><span class="p">.</span>4<span class="q">2</span></div>
<div class="abs txt r" style="left:987px;width:199px;top:780.86px">26736<span class="z">0</span><span class="p">.</span><span class="z">0</span><span class="q">0</span></div>
<div class="abs badge bo" style="left:1247.5px;top:777.56px">Outstanding</div>
<svg class="abs" style="left:510px;top:780.10px" width="24" height="21" viewBox="0 0 24 21"><rect x="2.2" y="0.65" width="19.6" height="12.9" rx="1.3" fill="none" stroke="#333" stroke-width="1.3"/><path d="M2.2 13.6L0.5 19.2Q0.3 20.3 1.6 20.3H22.4Q23.7 20.3 23.5 19.2L21.8 13.6" fill="none" stroke="#333" stroke-width="1.3"/><path d="M1.2 18.9h21.6" stroke="#ccc" stroke-width="2"/><path d="M1.8 13.6h20.4" stroke="#333" stroke-width="1.4"/><path d="M1 17.1h22" stroke="#333" stroke-width="1.2"/><rect x="4.5" y="4.4" width="4.2" height="6.6" rx=".8" fill="#999" stroke="#444" stroke-width=".9"/><path d="M16 3.3h2.3c1 0 1.7.6 1.7 1.6v4.7c0 1-.7 1.6-1.7 1.6H16" fill="#fff" stroke="#333" stroke-width="1.1"/><path d="M17.5 4.4v6M19 4.8v5.2" stroke="#333" stroke-width="1"/><rect x="8.5" y="2.5" width="7.5" height="8.8" rx="1" fill="#fff" stroke="#333" stroke-width="1.1"/><path d="M10.9 4.9h2.8M10.9 6.2h2.8M11.4 4.9c1.7 0 1.7 2.6 0 2.6l1.8 2.2" fill="none" stroke="#222" stroke-width=".9"/><rect x="8.5" y="11.5" width="7" height="1.5" fill="#888"/></svg>
<div class="abs cb" style="left:64.5px;top:818.51px"></div>
<div class="abs txt" style="left:118px;top:817.02px">2<span class="b">1</span><span class="p">-</span><span class="b">1</span><span class="b">1</span><span class="p">-</span>2<span class="z">0</span>2<span class="q">3</span></div>
<div class="abs txt" style="left:335px;top:817.02px">65<span class="q">0</span></div>
<div class="abs txt" style="left:552px;top:817.02px">2<span class="b">1</span><span class="p">-</span><span class="b">1</span><span class="b">1</span><span class="p">-</span>2<span class="z">0</span>2<span class="q">3</span></div>
<div class="abs txt r" style="left:770px;width:199px;top:817.02px">6<span class="b">1</span>3<span class="p">.</span>5<span class="q">2</span></div>
<div class="abs txt r" style="left:987px;width:199px;top:817.02px">5726<span class="p">.</span><span class="z">0</span><span class="q">0</span></div>
<div class="abs badge bo alt2" style="left:1247.5px;top:813.72px">Outstanding</div>
<svg class="abs" style="left:510px;top:816.35px" width="24" height="21" viewBox="0 0 24 21"><rect x="2.2" y="0.65" width="19.6" height="12.9" rx="1.3" fill="none" stroke="#333" stroke-width="1.3"/><path d="M2.2 13.6L0.5 19.2Q0.3 20.3 1.6 20.3H22.4Q23.7 20.3 23.5 19.2L21.8 13.6" fill="none" stroke="#333" stroke-width="1.3"/><path d="M1.2 18.9h21.6" stroke="#ccc" stroke-width="2"/><path d="M1.8 13.6h20.4" stroke="#333" stroke-width="1.4"/><path d="M1 17.1h22" stroke="#333" stroke-width="1.2"/><rect x="4.5" y="4.4" width="4.2" height="6.6" rx=".8" fill="#999" stroke="#444" stroke-width=".9"/><path d="M16 3.3h2.3c1 0 1.7.6 1.7 1.6v4.7c0 1-.7 1.6-1.7 1.6H16" fill="#fff" stroke="#333" stroke-width="1.1"/><path d="M17.5 4.4v6M19 4.8v5.2" stroke="#333" stroke-width="1"/><rect x="8.5" y="2.5" width="7.5" height="8.8" rx="1" fill="#fff" stroke="#333" stroke-width="1.1"/><path d="M10.9 4.9h2.8M10.9 6.2h2.8M11.4 4.9c1.7 0 1.7 2.6 0 2.6l1.8 2.2" fill="none" stroke="#222" stroke-width=".9"/><rect x="8.5" y="11.5" width="7" height="1.5" fill="#888"/></svg>
<div class="abs cb" style="left:64.5px;top:854.74px"></div>
<div class="abs txt" style="left:118px;top:853.18px">2<span class="b">1</span><span class="p">-</span><span class="b">1</span><span class="b">1</span><span class="p">-</span>2<span class="z">0</span>2<span class="q">3</span></div>
<div class="abs txt" style="left:335px;top:853.18px">64<span class="q">9</span></div>
<div class="abs txt" style="left:552px;top:853.18px">2<span class="b">1</span><span class="p">-</span><span class="b">1</span><span class="b">1</span><span class="p">-</span>2<span class="z">0</span>2<span class="q">3</span></div>
<div class="abs txt r" style="left:770px;width:199px;top:853.18px">2<span class="z">0</span>98<span class="p">.</span>5<span class="q">1</span></div>
<div class="abs txt r" style="left:987px;width:199px;top:853.18px"><span class="b">1</span>9586<span class="p">.</span><span class="z">0</span><span class="q">0</span></div>
<div class="abs badge bo" style="left:1247.5px;top:849.88px">Outstanding</div>
<svg class="abs" style="left:510px;top:852.60px" width="24" height="21" viewBox="0 0 24 21"><rect x="2.2" y="0.65" width="19.6" height="12.9" rx="1.3" fill="none" stroke="#333" stroke-width="1.3"/><path d="M2.2 13.6L0.5 19.2Q0.3 20.3 1.6 20.3H22.4Q23.7 20.3 23.5 19.2L21.8 13.6" fill="none" stroke="#333" stroke-width="1.3"/><path d="M1.2 18.9h21.6" stroke="#ccc" stroke-width="2"/><path d="M1.8 13.6h20.4" stroke="#333" stroke-width="1.4"/><path d="M1 17.1h22" stroke="#333" stroke-width="1.2"/><rect x="4.5" y="4.4" width="4.2" height="6.6" rx=".8" fill="#999" stroke="#444" stroke-width=".9"/><path d="M16 3.3h2.3c1 0 1.7.6 1.7 1.6v4.7c0 1-.7 1.6-1.7 1.6H16" fill="#fff" stroke="#333" stroke-width="1.1"/><path d="M17.5 4.4v6M19 4.8v5.2" stroke="#333" stroke-width="1"/><rect x="8.5" y="2.5" width="7.5" height="8.8" rx="1" fill="#fff" stroke="#333" stroke-width="1.1"/><path d="M10.9 4.9h2.8M10.9 6.2h2.8M11.4 4.9c1.7 0 1.7 2.6 0 2.6l1.8 2.2" fill="none" stroke="#222" stroke-width=".9"/><rect x="8.5" y="11.5" width="7" height="1.5" fill="#888"/></svg>
<div class="abs" id="actcol">
<div class="abs" style="left:0;top:0;width:205px;height:44.8px;background:#c9dffb"></div>
<div class="abs hcell" style="left:70px;top:13px;letter-spacing:1.4px">Actions</div>
<div class="abs" style="left:0;top:44px;width:205px;height:1px;background:#d4d8de"></div>
<div class="abs" style="left:0;top:46.00px;width:205px;height:36.16px;background:#fff;border-bottom:1px solid #dadada"></div>
<div class="abs" style="left:0;top:82.16px;width:205px;height:36.16px;background:#f1f6fe;border-bottom:1px solid #dadada"></div>
<div class="abs" style="left:0;top:118.32px;width:205px;height:36.16px;background:#fff;border-bottom:1px solid #dadada"></div>
<div class="abs" style="left:0;top:154.48px;width:205px;height:36.16px;background:#f1f6fe;border-bottom:1px solid #dadada"></div>
<div class="abs" style="left:0;top:190.64px;width:205px;height:36.16px;background:#fff;border-bottom:1px solid #dadada"></div>
<div class="abs" style="left:0;top:226.80px;width:205px;height:36.16px;background:#f1f6fe;border-bottom:1px solid #dadada"></div>
<div class="abs" style="left:0;top:262.96px;width:205px;height:36.16px;background:#fff;border-bottom:1px solid #dadada"></div>
<div class="abs" style="left:0;top:299.12px;width:205px;height:36.16px;background:#f1f6fe;border-bottom:1px solid #dadada"></div>
<div class="abs" style="left:0;top:335.28px;width:205px;height:36.16px;background:#fff;border-bottom:1px solid #dadada"></div>
<div class="abs" style="left:0;top:371.44px;width:205px;height:36.16px;background:#f1f6fe;border-bottom:1px solid #dadada"></div>
<div class="abs" style="left:0;top:407.60px;width:205px;height:36.16px;background:#fff;border-bottom:1px solid #dadada"></div>
<div class="abs" style="left:0;top:443.76px;width:205px;height:36.16px;background:#f1f6fe;border-bottom:1px solid #dadada"></div>
<div class="abs" style="left:0;top:479.92px;width:205px;height:36.16px;background:#fff;border-bottom:1px solid #dadada"></div>
<div class="abs" style="left:0;top:516.08px;width:205px;height:36.16px;background:#f1f6fe;border-bottom:1px solid #dadada"></div>
<div class="abs" style="left:0;top:552.24px;width:205px;height:36.16px;background:#fff;border-bottom:1px solid #dadada"></div>
<div class="abs" style="left:0;top:588.40px;width:205px;height:36.16px;background:#f1f6fe;border-bottom:1px solid #dadada"></div>
<div class="abs" style="left:0;top:624.56px;width:205px;height:36.16px;background:#fff;border-bottom:1px solid #dadada"></div>
<div class="abs" style="left:0;top:660.72px;width:205px;height:36.16px;background:#f1f6fe;border-bottom:1px solid #dadada"></div>
<div class="abs" style="left:0;top:696.88px;width:205px;height:36.16px;background:#fff;border-bottom:1px solid #dadada"></div>
<div class="abs" style="left:0;top:44.8px;width:205px;height:8px;background:linear-gradient(rgba(0,0,0,.05),rgba(0,0,0,0))"></div>
<div class="abs" style="left:0;top:0;width:12px;height:728px;background:linear-gradient(90deg,rgba(0,0,0,.03),rgba(0,0,0,0))"></div>
</div>
<svg class="abs" style="left:1379px;top:204.60px" width="18" height="13" viewBox="0 0 18 13"><path d="M1.2 6.5C3 3 5.8 1.2 9 1.2s6 1.8 7.8 5.3C15 10 12.2 11.8 9 11.8S3 10 1.2 6.5z" fill="none" stroke="#3b82e0" stroke-width="1.7"/><circle cx="9" cy="6.5" r="2.2" fill="none" stroke="#3b82e0" stroke-width="1.7"/></svg>
<div class="abs view" style="left:1405px;top:201.40px">View</div>
<div class="abs vdiv" style="left:1453px;top:202.20px"></div>
<svg class="abs" style="left:1464px;top:207.30px" width="13" height="8" viewBox="0 0 13 8"><path d="M1 1l5.5 5.5L12 1" fill="none" stroke="#7a7a7a" stroke-width="1.5"/></svg>
<svg class="abs" style="left:1379px;top:240.85px" width="18" height="13" viewBox="0 0 18 13"><path d="M1.2 6.5C3 3 5.8 1.2 9 1.2s6 1.8 7.8 5.3C15 10 12.2 11.8 9 11.8S3 10 1.2 6.5z" fill="none" stroke="#3b82e0" stroke-width="1.7"/><circle cx="9" cy="6.5" r="2.2" fill="none" stroke="#3b82e0" stroke-width="1.7"/></svg>
<div class="abs view" style="left:1405px;top:237.65px">View</div>
<div class="abs vdiv" style="left:1453px;top:238.45px"></div>
<svg class="abs" style="left:1464px;top:243.55px" width="13" height="8" viewBox="0 0 13 8"><path d="M1 1l5.5 5.5L12 1" fill="none" stroke="#7a7a7a" stroke-width="1.5"/></svg>
<svg class="abs" style="left:1379px;top:277.10px" width="18" height="13" viewBox="0 0 18 13"><path d="M1.2 6.5C3 3 5.8 1.2 9 1.2s6 1.8 7.8 5.3C15 10 12.2 11.8 9 11.8S3 10 1.2 6.5z" fill="none" stroke="#3b82e0" stroke-width="1.7"/><circle cx="9" cy="6.5" r="2.2" fill="none" stroke="#3b82e0" stroke-width="1.7"/></svg>
<div class="abs view" style="left:1405px;top:273.90px">View</div>
<div class="abs vdiv" style="left:1453px;top:274.70px"></div>
<svg class="abs" style="left:1464px;top:279.80px" width="13" height="8" viewBox="0 0 13 8"><path d="M1 1l5.5 5.5L12 1" fill="none" stroke="#7a7a7a" stroke-width="1.5"/></svg>
<svg class="abs" style="left:1379px;top:313.35px" width="18" height="13" viewBox="0 0 18 13"><path d="M1.2 6.5C3 3 5.8 1.2 9 1.2s6 1.8 7.8 5.3C15 10 12.2 11.8 9 11.8S3 10 1.2 6.5z" fill="none" stroke="#3b82e0" stroke-width="1.7"/><circle cx="9" cy="6.5" r="2.2" fill="none" stroke="#3b82e0" stroke-width="1.7"/></svg>
<div class="abs view" style="left:1405px;top:310.15px">View</div>
<div class="abs vdiv" style="left:1453px;top:310.95px"></div>
<svg class="abs" style="left:1464px;top:316.05px" width="13" height="8" viewBox="0 0 13 8"><path d="M1 1l5.5 5.5L12 1" fill="none" stroke="#7a7a7a" stroke-width="1.5"/></svg>
<svg class="abs" style="left:1379px;top:349.60px" width="18" height="13" viewBox="0 0 18 13"><path d="M1.2 6.5C3 3 5.8 1.2 9 1.2s6 1.8 7.8 5.3C15 10 12.2 11.8 9 11.8S3 10 1.2 6.5z" fill="none" stroke="#3b82e0" stroke-width="1.7"/><circle cx="9" cy="6.5" r="2.2" fill="none" stroke="#3b82e0" stroke-width="1.7"/></svg>
<div class="abs view" style="left:1405px;top:346.40px">View</div>
<div class="abs vdiv" style="left:1453px;top:347.20px"></div>
<svg class="abs" style="left:1464px;top:352.30px" width="13" height="8" viewBox="0 0 13 8"><path d="M1 1l5.5 5.5L12 1" fill="none" stroke="#7a7a7a" stroke-width="1.5"/></svg>
<svg class="abs" style="left:1379px;top:385.85px" width="18" height="13" viewBox="0 0 18 13"><path d="M1.2 6.5C3 3 5.8 1.2 9 1.2s6 1.8 7.8 5.3C15 10 12.2 11.8 9 11.8S3 10 1.2 6.5z" fill="none" stroke="#3b82e0" stroke-width="1.7"/><circle cx="9" cy="6.5" r="2.2" fill="none" stroke="#3b82e0" stroke-width="1.7"/></svg>
<div class="abs view" style="left:1405px;top:382.65px">View</div>
<div class="abs vdiv" style="left:1453px;top:383.45px"></div>
<svg class="abs" style="left:1464px;top:388.55px" width="13" height="8" viewBox="0 0 13 8"><path d="M1 1l5.5 5.5L12 1" fill="none" stroke="#7a7a7a" stroke-width="1.5"/></svg>
<svg class="abs" style="left:1379px;top:422.10px" width="18" height="13" viewBox="0 0 18 13"><path d="M1.2 6.5C3 3 5.8 1.2 9 1.2s6 1.8 7.8 5.3C15 10 12.2 11.8 9 11.8S3 10 1.2 6.5z" fill="none" stroke="#3b82e0" stroke-width="1.7"/><circle cx="9" cy="6.5" r="2.2" fill="none" stroke="#3b82e0" stroke-width="1.7"/></svg>
<div class="abs view" style="left:1405px;top:418.90px">View</div>
<div class="abs vdiv" style="left:1453px;top:419.70px"></div>
<svg class="abs" style="left:1464px;top:424.80px" width="13" height="8" viewBox="0 0 13 8"><path d="M1 1l5.5 5.5L12 1" fill="none" stroke="#7a7a7a" stroke-width="1.5"/></svg>
<svg class="abs" style="left:1379px;top:458.35px" width="18" height="13" viewBox="0 0 18 13"><path d="M1.2 6.5C3 3 5.8 1.2 9 1.2s6 1.8 7.8 5.3C15 10 12.2 11.8 9 11.8S3 10 1.2 6.5z" fill="none" stroke="#3b82e0" stroke-width="1.7"/><circle cx="9" cy="6.5" r="2.2" fill="none" stroke="#3b82e0" stroke-width="1.7"/></svg>
<div class="abs view" style="left:1405px;top:455.15px">View</div>
<div class="abs vdiv" style="left:1453px;top:455.95px"></div>
<svg class="abs" style="left:1464px;top:461.05px" width="13" height="8" viewBox="0 0 13 8"><path d="M1 1l5.5 5.5L12 1" fill="none" stroke="#7a7a7a" stroke-width="1.5"/></svg>
<svg class="abs" style="left:1379px;top:494.60px" width="18" height="13" viewBox="0 0 18 13"><path d="M1.2 6.5C3 3 5.8 1.2 9 1.2s6 1.8 7.8 5.3C15 10 12.2 11.8 9 11.8S3 10 1.2 6.5z" fill="none" stroke="#3b82e0" stroke-width="1.7"/><circle cx="9" cy="6.5" r="2.2" fill="none" stroke="#3b82e0" stroke-width="1.7"/></svg>
<div class="abs view" style="left:1405px;top:491.40px">View</div>
<div class="abs vdiv" style="left:1453px;top:492.20px"></div>
<svg class="abs" style="left:1464px;top:497.30px" width="13" height="8" viewBox="0 0 13 8"><path d="M1 1l5.5 5.5L12 1" fill="none" stroke="#7a7a7a" stroke-width="1.5"/></svg>
<svg class="abs" style="left:1379px;top:530.85px" width="18" height="13" viewBox="0 0 18 13"><path d="M1.2 6.5C3 3 5.8 1.2 9 1.2s6 1.8 7.8 5.3C15 10 12.2 11.8 9 11.8S3 10 1.2 6.5z" fill="none" stroke="#3b82e0" stroke-width="1.7"/><circle cx="9" cy="6.5" r="2.2" fill="none" stroke="#3b82e0" stroke-width="1.7"/></svg>
<div class="abs view" style="left:1405px;top:527.65px">View</div>
<div class="abs vdiv" style="left:1453px;top:528.45px"></div>
<svg class="abs" style="left:1464px;top:533.55px" width="13" height="8" viewBox="0 0 13 8"><path d="M1 1l5.5 5.5L12 1" fill="none" stroke="#7a7a7a" stroke-width="1.5"/></svg>
<svg class="abs" style="left:1379px;top:567.10px" width="18" height="13" viewBox="0 0 18 13"><path d="M1.2 6.5C3 3 5.8 1.2 9 1.2s6 1.8 7.8 5.3C15 10 12.2 11.8 9 11.8S3 10 1.2 6.5z" fill="none" stroke="#3b82e0" stroke-width="1.7"/><circle cx="9" cy="6.5" r="2.2" fill="none" stroke="#3b82e0" stroke-width="1.7"/></svg>
<div class="abs view" style="left:1405px;top:563.90px">View</div>
<div class="abs vdiv" style="left:1453px;top:564.70px"></div>
<svg class="abs" style="left:1464px;top:569.80px" width="13" height="8" viewBox="0 0 13 8"><path d="M1 1l5.5 5.5L12 1" fill="none" stroke="#7a7a7a" stroke-width="1.5"/></svg>
<svg class="abs" style="left:1379px;top:603.35px" width="18" height="13" viewBox="0 0 18 13"><path d="M1.2 6.5C3 3 5.8 1.2 9 1.2s6 1.8 7.8 5.3C15 10 12.2 11.8 9 11.8S3 10 1.2 6.5z" fill="none" stroke="#3b82e0" stroke-width="1.7"/><circle cx="9" cy="6.5" r="2.2" fill="none" stroke="#3b82e0" stroke-width="1.7"/></svg>
<div class="abs view" style="left:1405px;top:600.15px">View</div>
<div class="abs vdiv" style="left:1453px;top:600.95px"></div>
<svg class="abs" style="left:1464px;top:606.05px" width="13" height="8" viewBox="0 0 13 8"><path d="M1 1l5.5 5.5L12 1" fill="none" stroke="#7a7a7a" stroke-width="1.5"/></svg>
<svg class="abs" style="left:1379px;top:639.60px" width="18" height="13" viewBox="0 0 18 13"><path d="M1.2 6.5C3 3 5.8 1.2 9 1.2s6 1.8 7.8 5.3C15 10 12.2 11.8 9 11.8S3 10 1.2 6.5z" fill="none" stroke="#3b82e0" stroke-width="1.7"/><circle cx="9" cy="6.5" r="2.2" fill="none" stroke="#3b82e0" stroke-width="1.7"/></svg>
<div class="abs view" style="left:1405px;top:636.40px">View</div>
<div class="abs vdiv" style="left:1453px;top:637.20px"></div>
<svg class="abs" style="left:1464px;top:642.30px" width="13" height="8" viewBox="0 0 13 8"><path d="M1 1l5.5 5.5L12 1" fill="none" stroke="#7a7a7a" stroke-width="1.5"/></svg>
<svg class="abs" style="left:1379px;top:675.85px" width="18" height="13" viewBox="0 0 18 13"><path d="M1.2 6.5C3 3 5.8 1.2 9 1.2s6 1.8 7.8 5.3C15 10 12.2 11.8 9 11.8S3 10 1.2 6.5z" fill="none" stroke="#3b82e0" stroke-width="1.7"/><circle cx="9" cy="6.5" r="2.2" fill="none" stroke="#3b82e0" stroke-width="1.7"/></svg>
<div class="abs view" style="left:1405px;top:672.65px">View</div>
<div class="abs vdiv" style="left:1453px;top:673.45px"></div>
<svg class="abs" style="left:1464px;top:678.55px" width="13" height="8" viewBox="0 0 13 8"><path d="M1 1l5.5 5.5L12 1" fill="none" stroke="#7a7a7a" stroke-width="1.5"/></svg>
<svg class="abs" style="left:1379px;top:712.10px" width="18" height="13" viewBox="0 0 18 13"><path d="M1.2 6.5C3 3 5.8 1.2 9 1.2s6 1.8 7.8 5.3C15 10 12.2 11.8 9 11.8S3 10 1.2 6.5z" fill="none" stroke="#3b82e0" stroke-width="1.7"/><circle cx="9" cy="6.5" r="2.2" fill="none" stroke="#3b82e0" stroke-width="1.7"/></svg>
<div class="abs view" style="left:1405px;top:708.90px">View</div>
<div class="abs vdiv" style="left:1453px;top:709.70px"></div>
<svg class="abs" style="left:1464px;top:714.80px" width="13" height="8" viewBox="0 0 13 8"><path d="M1 1l5.5 5.5L12 1" fill="none" stroke="#7a7a7a" stroke-width="1.5"/></svg>
<svg class="abs" style="left:1379px;top:748.35px" width="18" height="13" viewBox="0 0 18 13"><path d="M1.2 6.5C3 3 5.8 1.2 9 1.2s6 1.8 7.8 5.3C15 10 12.2 11.8 9 11.8S3 10 1.2 6.5z" fill="none" stroke="#3b82e0" stroke-width="1.7"/><circle cx="9" cy="6.5" r="2.2" fill="none" stroke="#3b82e0" stroke-width="1.7"/></svg>
<div class="abs view" style="left:1405px;top:745.15px">View</div>
<div class="abs vdiv" style="left:1453px;top:745.95px"></div>
<svg class="abs" style="left:1464px;top:751.05px" width="13" height="8" viewBox="0 0 13 8"><path d="M1 1l5.5 5.5L12 1" fill="none" stroke="#7a7a7a" stroke-width="1.5"/></svg>
<svg class="abs" style="left:1379px;top:784.60px" width="18" height="13" viewBox="0 0 18 13"><path d="M1.2 6.5C3 3 5.8 1.2 9 1.2s6 1.8 7.8 5.3C15 10 12.2 11.8 9 11.8S3 10 1.2 6.5z" fill="none" stroke="#3b82e0" stroke-width="1.7"/><circle cx="9" cy="6.5" r="2.2" fill="none" stroke="#3b82e0" stroke-width="1.7"/></svg>
<div class="abs view" style="left:1405px;top:781.40px">View</div>
<div class="abs vdiv" style="left:1453px;top:782.20px"></div>
<svg class="abs" style="left:1464px;top:787.30px" width="13" height="8" viewBox="0 0 13 8"><path d="M1 1l5.5 5.5L12 1" fill="none" stroke="#7a7a7a" stroke-width="1.5"/></svg>
<svg class="abs" style="left:1379px;top:820.85px" width="18" height="13" viewBox="0 0 18 13"><path d="M1.2 6.5C3 3 5.8 1.2 9 1.2s6 1.8 7.8 5.3C15 10 12.2 11.8 9 11.8S3 10 1.2 6.5z" fill="none" stroke="#3b82e0" stroke-width="1.7"/><circle cx="9" cy="6.5" r="2.2" fill="none" stroke="#3b82e0" stroke-width="1.7"/></svg>
<div class="abs view" style="left:1405px;top:817.65px">View</div>
<div class="abs vdiv" style="left:1453px;top:818.45px"></div>
<svg class="abs" style="left:1464px;top:823.55px" width="13" height="8" viewBox="0 0 13 8"><path d="M1 1l5.5 5.5L12 1" fill="none" stroke="#7a7a7a" stroke-width="1.5"/></svg>
<svg class="abs" style="left:1379px;top:857.10px" width="18" height="13" viewBox="0 0 18 13"><path d="M1.2 6.5C3 3 5.8 1.2 9 1.2s6 1.8 7.8 5.3C15 10 12.2 11.8 9 11.8S3 10 1.2 6.5z" fill="none" stroke="#3b82e0" stroke-width="1.7"/><circle cx="9" cy="6.5" r="2.2" fill="none" stroke="#3b82e0" stroke-width="1.7"/></svg>
<div class="abs view" style="left:1405px;top:853.90px">View</div>
<div class="abs vdiv" style="left:1453px;top:854.70px"></div>
<svg class="abs" style="left:1464px;top:859.80px" width="13" height="8" viewBox="0 0 13 8"><path d="M1 1l5.5 5.5L12 1" fill="none" stroke="#7a7a7a" stroke-width="1.5"/></svg>
<div class="abs" id="vscroll"></div>
<div class="abs" id="hscroll"></div>
<div class="abs" style="left:706px;top:98px;font-size:24px;line-height:26px;color:#ff0000;white-space:nowrap">e-invoice icon</div>
<svg class="abs" style="left:0;top:0" width="1536" height="905" viewBox="0 0 1536 905"><rect x="487.5" y="328" width="58" height="549.5" rx="1" fill="none" stroke="#ff0000" stroke-width="5"/><path d="M541 323.8 L681.6 160.4 L672.8 151.6 L720.8 135.6 L706.6 183.3 L697.4 176.6 L541.8 326.5 Z" fill="#ff0000" stroke="#ff0000" stroke-width="2" stroke-linejoin="round"/></svg>
</body></html>
